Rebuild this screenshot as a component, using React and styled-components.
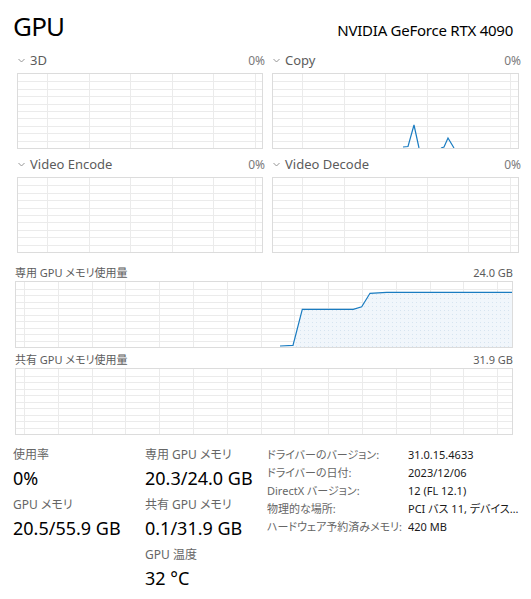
import React from "react";
import styled, { createGlobalStyle } from "styled-components";

const GlobalStyle = createGlobalStyle`
  html, body {
    margin: 0;
    padding: 0;
    background: #fff;
  }
  body {
    font-family: "Noto Sans", "Noto Sans CJK JP", sans-serif;
    font-feature-settings: "palt";
    color: #1a1a1a;
  }
`;

const LINE = "#1a7cc1";

const smallCharts = [
  { name: "3D", value: "0%" },
  {
    name: "Copy",
    value: "0%",
    path: "M131 74 L136 73.5 L142 52 L147 75 M169 75 L172 74 L176 65 L182 75",
  },
  { name: "Video Encode", value: "0%" },
  { name: "Video Decode", value: "0%" },
];

const memLine =
  "M265 65 L278 64.3 L287.3 28.3 L338.3 28.3 L346.7 25.7 L355 12.3 L371.7 11.3 L498 11.3";
const memFill =
  "M278 66 L278 64.3 L287.3 28.3 L338.3 28.3 L346.7 25.7 L355 12.3 L371.7 11.3 L498 11.3 L498 66 Z";

const leftStats = [
  [
    { label: "使用率", value: "0%" },
    { label: "GPU メモリ", value: "20.5/55.9 GB" },
  ],
  [
    { label: "専用 GPU メモリ", value: "20.3/24.0 GB" },
    { label: "共有 GPU メモリ", value: "0.1/31.9 GB" },
    { label: "GPU 温度", value: "32 °C" },
  ],
];

const details = [
  ["ドライバーのバージョン:", "31.0.15.4633"],
  ["ドライバーの日付:", "2023/12/06"],
  ["DirectX バージョン:", "12 (FL 12.1)"],
  ["物理的な場所:", "PCI バス 11, デバイス 0, 機能 0"],
  ["ハードウェア予約済みメモリ:", "420 MB"],
];

function Chart({ width, height, rows, colOffset, colStep, children }) {
  const w = width - 2;
  const h = height - 2;
  const lines = [];
  for (let i = 1; i < rows; i++) {
    const y = Math.round((i * h) / rows) + 0.5;
    lines.push(<line key={"h" + i} x1={0} x2={w} y1={y} y2={y} />);
  }
  for (let x = colOffset - 1; x < w; x += colStep) {
    const xx = Math.round(x) + 0.5;
    lines.push(<line key={"v" + x} x1={xx} x2={xx} y1={0} y2={h} />);
  }
  return (
    <ChartBox $height={height}>
      <svg width={w} height={h} viewBox={`0 0 ${w} ${h}`}>
        <g stroke="#ebebeb" strokeWidth="1" shapeRendering="crispEdges">
          {lines}
        </g>
        <g transform="translate(-1 -1)">{children}</g>
      </svg>
    </ChartBox>
  );
}

function Chevron() {
  return (
    <ChevronIcon viewBox="0 0 7 5" width="7" height="5">
      <path d="M0.5 1 L3.5 4 L6.5 1" fill="none" stroke="#8a8a8a" strokeWidth="0.9" />
    </ChevronIcon>
  );
}

export default function App() {
  return (
    <Page>
      <GlobalStyle />
      <Header>
        <Title>GPU</Title>
        <Adapter>NVIDIA GeForce RTX 4090</Adapter>
      </Header>

      <SmallGrid>
        {smallCharts.map((c, i) => (
          <Cell key={c.name}>
            <CellHead>
              <Chevron />
              <span>{c.name}</span>
              <Percent>{c.value}</Percent>
            </CellHead>
            <Chart
              width={i % 2 === 0 ? 246 : 247}
              height={76}
              rows={10}
              colOffset={30}
              colStep={41.6}
            >
              {c.path && (
                <path d={c.path} fill="none" stroke={LINE} strokeWidth="1.2" />
              )}
            </Chart>
          </Cell>
        ))}
      </SmallGrid>

      <BigSection>
        <BigHead>
          <span>専用 GPU メモリ使用量</span>
          <span>24.0 GB</span>
        </BigHead>
        <Chart width={498} height={67} rows={10} colOffset={9} colStep={33.8}>
          <defs>
            <pattern id="dots" width="4" height="4" patternUnits="userSpaceOnUse">
              <rect width="4" height="4" fill="#f1f6fb" />
              <rect x="1" y="1" width="1" height="1" fill="#d6e4f0" />
            </pattern>
          </defs>
          <path d={memFill} fill="url(#dots)" />
          <path d={memLine} fill="none" stroke={LINE} strokeWidth="1.2" />
        </Chart>
        <BigHead>
          <span>共有 GPU メモリ使用量</span>
          <span>31.9 GB</span>
        </BigHead>
        <Chart width={498} height={67} rows={10} colOffset={9} colStep={33.8} />
      </BigSection>

      <Stats>
        {leftStats.map((col, i) => (
          <StatCol key={i} $width={i === 0 ? 132 : 122}>
            {col.map((s) => (
              <div key={s.label}>
                <StatLabel>{s.label}</StatLabel>
                <StatValue>{s.value}</StatValue>
              </div>
            ))}
          </StatCol>
        ))}
        <Details>
          {details.map(([k, v]) => (
            <React.Fragment key={k}>
              <DetailKey>{k}</DetailKey>
              <DetailValue>{v}</DetailValue>
            </React.Fragment>
          ))}
        </Details>
      </Stats>
    </Page>
  );
}

const Page = styled.div`
  width: 531px;
  height: 599px;
  overflow: hidden;
  background: #fff;
`;

const Header = styled.div`
  display: flex;
  justify-content: space-between;
  align-items: baseline;
  box-sizing: border-box;
  height: 44px;
  padding: 8px 18px 0 13px;
`;

const Title = styled.h1`
  margin: 0;
  font-size: 26px;
  font-weight: 400;
  line-height: 36px;
  letter-spacing: -0.8px;
  color: #000;
`;

const Adapter = styled.div`
  font-size: 15px;
  line-height: 36px;
  letter-spacing: -0.25px;
  color: #000;
`;

const SmallGrid = styled.div`
  display: grid;
  grid-template-columns: 246px 247px;
  column-gap: 9px;
  row-gap: 4px;
  padding-left: 17px;
  margin-top: 5px;
`;

const Cell = styled.div`
  display: flex;
  flex-direction: column;
`;

const CellHead = styled.div`
  display: flex;
  align-items: center;
  height: 22px;
  margin-bottom: 2px;
  font-size: 13px;
  color: #5c5c5c;
`;

const ChevronIcon = styled.svg`
  display: block;
  margin: 0 5px 0 1px;
`;

const Percent = styled.span`
  margin-left: auto;
  margin-right: -2px;
  font-size: 12px;
  color: #7a7a7a;
`;

const ChartBox = styled.div`
  box-sizing: border-box;
  width: 100%;
  height: ${(p) => p.$height}px;
  border: 1px solid #dcdcdc;
  background: #fff;

  svg {
    display: block;
  }
`;

const BigSection = styled.div`
  width: 498px;
  padding-left: 15px;
  margin-top: 8px;
`;

const BigHead = styled.div`
  display: flex;
  justify-content: space-between;
  align-items: flex-end;
  height: 20px;
  font-size: 11px;
  line-height: 16px;
  color: #5c5c5c;
`;

const Stats = styled.div`
  display: flex;
  padding-left: 13px;
  margin-top: 10px;
`;

const StatCol = styled.div`
  width: ${(p) => p.$width}px;
  display: flex;
  flex-direction: column;
  gap: 4px;
`;

const StatLabel = styled.div`
  font-size: 12px;
  line-height: 20px;
  color: #666;
`;

const StatValue = styled.div`
  font-size: 18px;
  line-height: 26px;
  color: #000;
`;

const Details = styled.div`
  display: grid;
  grid-template-columns: 141px 112px;
  align-content: start;
  margin-top: 1px;
  line-height: 18px;
`;

const DetailKey = styled.div`
  font-size: 11px;
  color: #666;
  white-space: nowrap;
`;

const DetailValue = styled.div`
  font-size: 11px;
  color: #1a1a1a;
  white-space: nowrap;
  overflow: hidden;
  text-overflow: ellipsis;
`;
